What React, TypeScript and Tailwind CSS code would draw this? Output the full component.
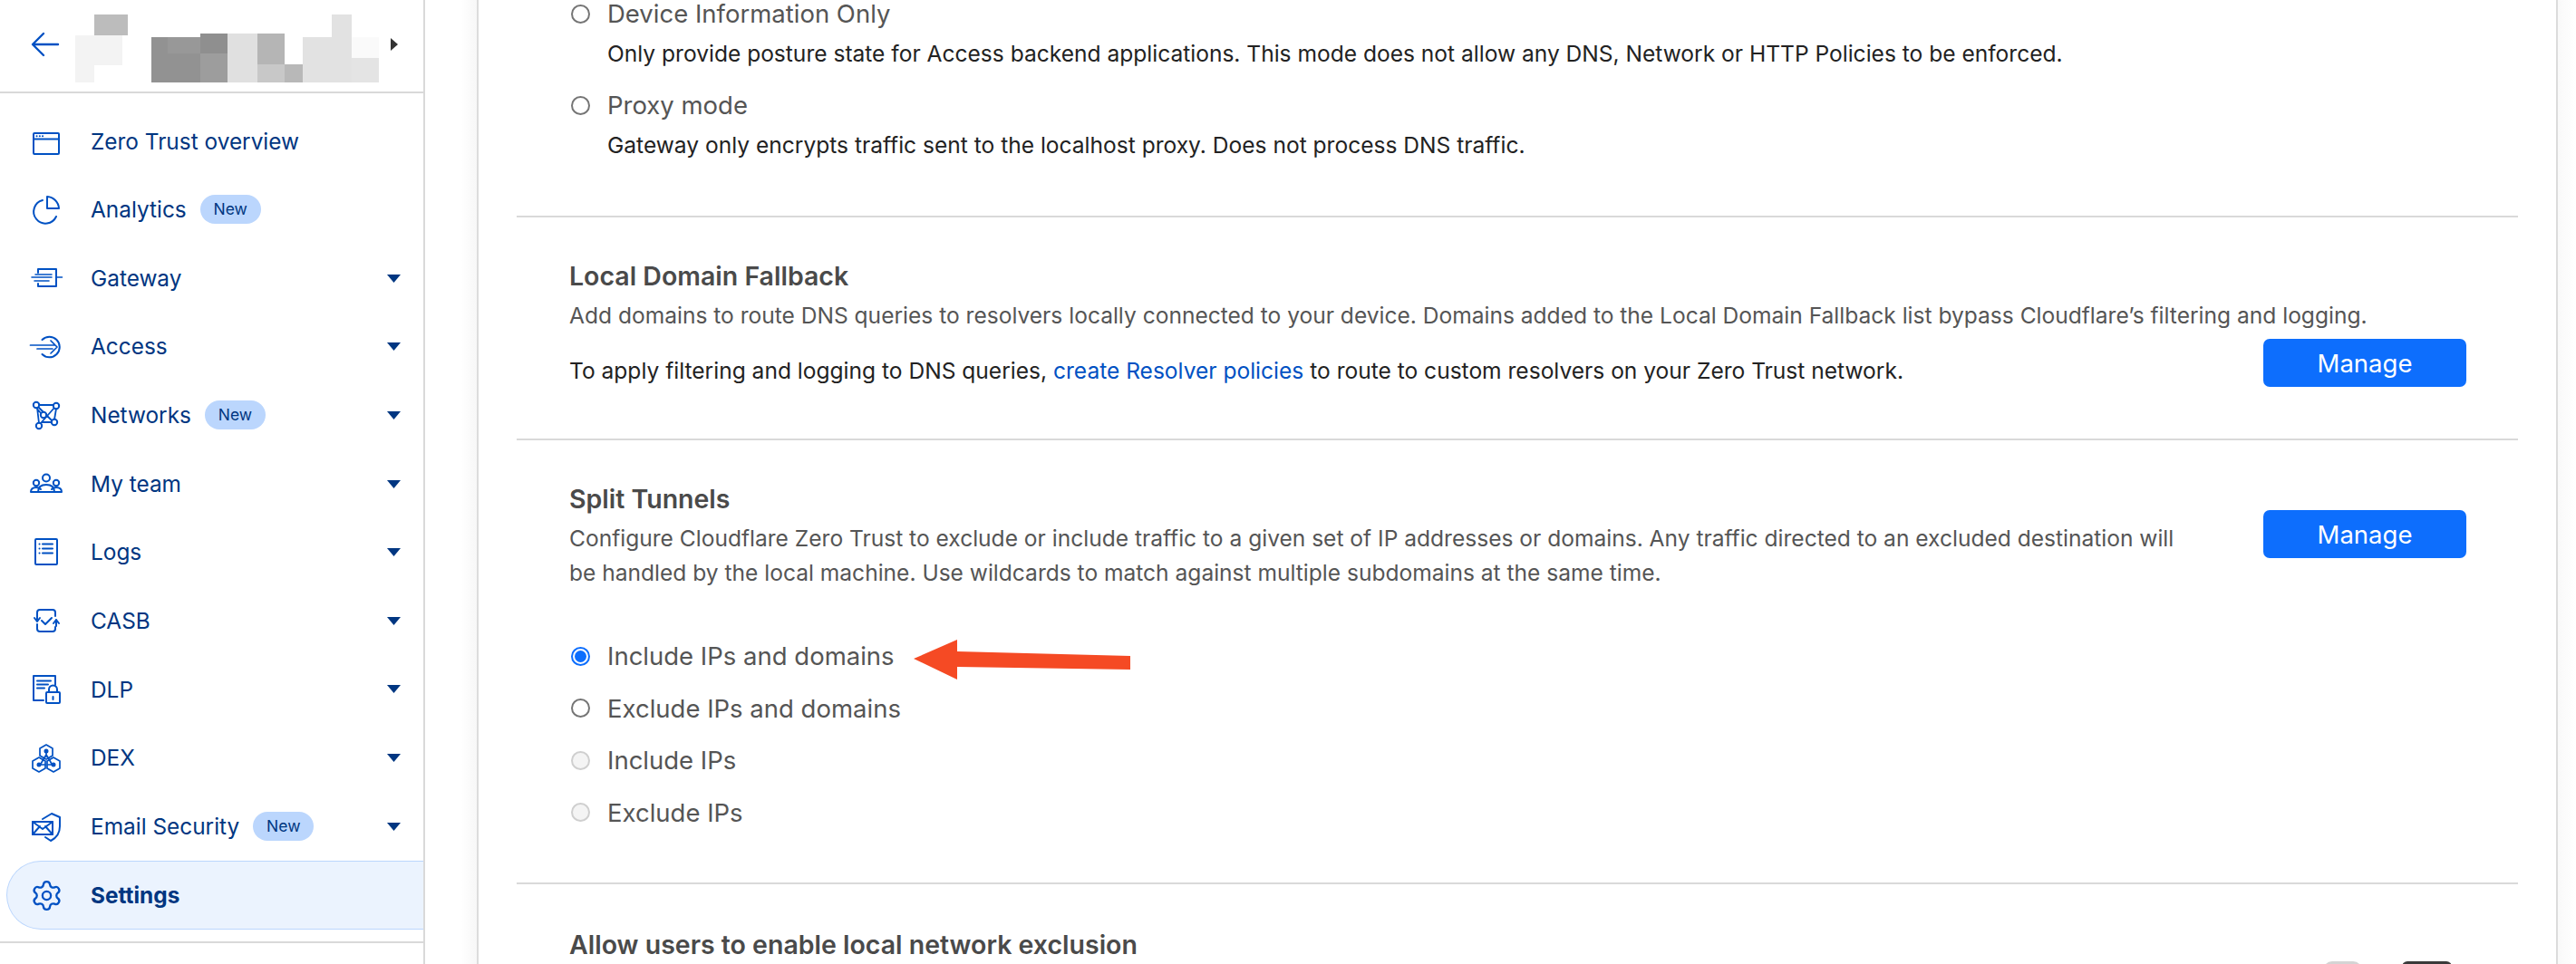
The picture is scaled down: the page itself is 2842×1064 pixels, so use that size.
import React from "react";
import { Settings } from "lucide-react";

const blue = "#0051c3";

const Svg = ({ children }: { children: React.ReactNode }) => (
  <svg width="40" height="40" viewBox="0 0 40 40" fill="none" stroke={blue} strokeWidth="2" strokeLinecap="round" strokeLinejoin="round" className="shrink-0">
    {children}
  </svg>
);

const icons: Record<string, React.ReactNode> = {
  overview: (
    <Svg>
      <rect x="6" y="11" width="28" height="23" rx="1" />
      <path d="M6 17.5H34" />
      <path d="M9.5 14.2h.1M12.8 14.2h.1M16 14.2h.1" />
    </Svg>
  ),
  analytics: (
    <Svg>
      <path d="M21 6A14 14 0 0 1 34 19H21Z" />
      <path d="M16 10A13 13 0 1 0 31 28" />
    </Svg>
  ),
  gateway: (
    <Svg>
      <path d="M11 14V10H31V29H11V26" />
      <path d="M31 19H37.5M4 19H26M8 16H26M7 23H23" strokeWidth="1.6" />
    </Svg>
  ),
  access: (
    <Svg>
      <path d="M15.5 12A11.3 11.3 0 1 1 15.5 28" />
      <path d="M2.5 18H30M10 22H27M25 13L32 20L25 27" strokeWidth="1.7" />
    </Svg>
  ),
  networks: (
    <Svg>
      <path d="M12 9H28M31 13L29 25M26 28H15M12 29L10 12M11 11L26 26M29 12L14 29M9 12L14 18" strokeWidth="1.8" />
      <circle cx="9" cy="9" r="3.2" fill="white" />
      <circle cx="31" cy="10" r="3.2" fill="white" />
      <circle cx="29" cy="28" r="3.2" fill="white" />
      <circle cx="12" cy="32" r="3.2" fill="white" />
      <circle cx="17" cy="20" r="3.2" fill="white" />
    </Svg>
  ),
  team: (
    <Svg>
      <circle cx="20" cy="13.5" r="4" />
      <circle cx="9" cy="19" r="3.2" />
      <circle cx="31" cy="19" r="3.2" />
      <path d="M3 29H37M3 29C3 25 6 24 9 24C11 24 13 25 14 26M37 29C37 25 34 24 31 24C29 24 27 25 26 26M11 29C11 23 15 21 20 21C25 21 29 23 29 29" />
    </Svg>
  ),
  logs: (
    <Svg>
      <rect x="8" y="5" width="24" height="28" rx="1" />
      <path d="M12.5 10.5h.1M12.5 15.5h.1M12.5 20.5h.1M16 10.5H27M16 15.5H27M16 20.5H27" />
    </Svg>
  ),
  casb: (
    <Svg>
      <path d="M10 14V11A3 3 0 0 1 13 8H27A3 3 0 0 1 30 11V15M30 27V29A3 3 0 0 1 27 32H13A3 3 0 0 1 10 29V24" />
      <path d="M7 17L10 21L13 17M28 23L31 19L34 23M31 19V26M10 14V21" />
      <path d="M15 20L19 24L26 17" />
    </Svg>
  ),
  dlp: (
    <Svg>
      <path d="M17 32H6V5H30V15" />
      <path d="M10 10.5H25M10 14.5H22M10 18.5H18" />
      <rect x="20" y="23" width="15" height="12" rx="1" />
      <path d="M23 23V20A4.5 4.5 0 0 1 32 20V23" />
      <path d="M27.5 28V31" />
    </Svg>
  ),
  dex: (
    <Svg>
      <path d="M20 5L27 9V17L20 21L13 17V9Z" strokeWidth="1.7" />
      <path d="M12 19L19 23V31L12 35L5 31V23Z" strokeWidth="1.7" />
      <path d="M28 19L35 23V31L28 35L21 31V23Z" strokeWidth="1.7" />
      <path d="M20 12V18M12 27H19M28 27H22M20 16L14 26M20 16L26 26" strokeWidth="1.7" />
      <circle cx="20" cy="12" r="1.5" fill={blue} />
      <circle cx="12" cy="27" r="1.5" fill={blue} />
      <circle cx="28" cy="27" r="1.5" fill={blue} />
    </Svg>
  ),
  email: (
    <Svg>
      <path d="M16 12L26 6L35 10V20C35 28 31 33 25 36L19 32" />
      <path d="M5 15H27V29H5Z" fill="white" />
      <path d="M5 15L16 23L27 15M5 29L13 20M27 29L19 20" />
    </Svg>
  ),
};

const Caret = () => (
  <svg width="15" height="9" viewBox="0 0 15 9" className="shrink-0">
    <path d="M0 0H15L7.5 9Z" fill="#003681" />
  </svg>
);

const Badge = () => (
  <span className="ml-[15px] flex h-[32px] w-[67px] items-center justify-center rounded-full bg-[#bbd6fd] text-[17.5px] text-[#003681]">New</span>
);

const items = [
  { icon: "overview", label: "Zero Trust overview" },
  { icon: "analytics", label: "Analytics", badge: true },
  { icon: "gateway", label: "Gateway", caret: true },
  { icon: "access", label: "Access", caret: true },
  { icon: "networks", label: "Networks", badge: true, caret: true },
  { icon: "team", label: "My team", caret: true },
  { icon: "logs", label: "Logs", caret: true },
  { icon: "casb", label: "CASB", caret: true },
  { icon: "dlp", label: "DLP", caret: true },
  { icon: "dex", label: "DEX", caret: true },
  { icon: "email", label: "Email Security", badge: true, caret: true },
];

const mosaic = [
  [104, 16, 37, 23, "#bcbcbc"],
  [83, 39, 52, 33, "#f3f3f3"],
  [83, 72, 21, 19, "#f3f3f3"],
  [167, 41, 54, 50, "#929292"],
  [185, 41, 36, 18, "#989898"],
  [221, 37, 30, 22, "#8f8f8f"],
  [221, 59, 30, 32, "#9d9d9d"],
  [251, 37, 33, 54, "#e0e0e0"],
  [284, 37, 30, 34, "#b5b5b5"],
  [284, 71, 30, 20, "#c8c8c8"],
  [314, 71, 20, 20, "#b8b8b8"],
  [334, 41, 54, 50, "#e2e2e2"],
  [366, 16, 22, 25, "#e2e2e2"],
  [388, 41, 30, 23, "#fafafa"],
  [388, 64, 30, 27, "#e4e4e4"],
] as const;

const Radio = ({ label, state, short }: { label: string; state: "on" | "off" | "disabled"; short?: boolean }) => (
  <div className={`ml-[2px] flex items-center gap-[19px] text-[27.5px] leading-[30px] text-[#555555] ${short ? "h-[30px]" : "h-[38px]"}`}>
    {state === "on" && (
      <span className="flex size-[21px] shrink-0 items-center justify-center rounded-full border-2 border-[#0d6efd] bg-white">
        <span className="size-[13px] rounded-full bg-[#0d6efd]" />
      </span>
    )}
    {state === "off" && <span className="size-[21px] shrink-0 rounded-full border-2 border-[#757575] bg-white" />}
    {state === "disabled" && <span className="size-[21px] shrink-0 rounded-full border-2 border-[#cfcfcf] bg-[#f4f4f4]" />}
    <span className="whitespace-nowrap">{label}</span>
  </div>
);

const Manage = () => (
  <button className="flex h-[53px] w-[224px] shrink-0 items-center justify-center rounded-[7px] bg-[#0d6efd] pt-[2px] text-[27.5px] text-white">Manage</button>
);

const Heading = ({ children }: { children: React.ReactNode }) => (
  <h3 className="h-[36px] pt-[2px] text-[28.5px] leading-[36px] font-semibold whitespace-nowrap text-[#4a4a4a]">{children}</h3>
);

export default function App() {
  return (
    <div className="flex h-[1064px] w-[2842px] overflow-hidden bg-white font-['Inter',sans-serif]">
      <aside className="flex h-full w-[469px] shrink-0 flex-col border-r-2 border-[#d9d9d9] bg-white">
        <div className="flex h-[103px] shrink-0 items-center border-b-2 border-[#d9d9d9]">
          <svg width="467" height="101" viewBox="0 0 467 101" fill="none" className="shrink-0">
            <path d="M64 49H37M48 37L36 49L48 61" stroke={blue} strokeWidth="2.4" strokeLinecap="round" strokeLinejoin="round" />
            {mosaic.map(([x, y, w, h, c], i) => (
              <rect key={i} x={x} y={y} width={w} height={h} fill={c} />
            ))}
            <path d="M431 42L439 49L431 56Z" fill="#333333" />
          </svg>
        </div>
        <nav className="pt-[15px]">
          {items.map((it) => (
            <div key={it.label} className="flex h-[75.65px] items-center pr-[25px] pl-[31px]">
              {icons[it.icon]}
              <span className="ml-[29px] text-[24.4px] whitespace-nowrap text-[#003681]">{it.label}</span>
              {it.badge && <Badge />}
              {it.caret && <span className="ml-auto flex"><Caret /></span>}
            </div>
          ))}
          <div className="ml-[7px] flex h-[76px] items-center rounded-l-full border border-r-0 border-[#bbd6fd] bg-[#ebf3fe] pl-[23px]">
            <span className="flex size-[40px] items-center justify-center">
              <Settings size={37} color={blue} strokeWidth={1.5} />
            </span>
            <span className="ml-[29px] text-[24.4px] font-bold text-[#003681]">Settings</span>
          </div>
        </nav>
        <div className="mt-[13px] border-t-2 border-[#d9d9d9]" />
      </aside>
      <div className="w-[57px] shrink-0 bg-gradient-to-r from-white from-70% to-[#f7f7f7]" />
      <main className="w-[2296px] shrink-0 border-x-2 border-[#dcdcdc] bg-white px-[42px]">
        <section className="flex flex-col gap-[13px] pb-[52px] pl-[58px]">
          <div>
            <Radio label="Device Information Only" state="off" short />
            <p className="mt-[4px] h-[50px] pl-[42px] text-[24.55px] leading-[50px] whitespace-nowrap text-[#222222]">Only provide posture state for Access backend applications. This mode does not allow any DNS, Network or HTTP Policies to be enforced.</p>
          </div>
          <div className="pb-[1px]">
            <Radio label="Proxy mode" state="off" />
            <p className="h-[50px] pl-[42px] text-[24.55px] leading-[50px] whitespace-nowrap text-[#222222]">Gateway only encrypts traffic sent to the localhost proxy. Does not process DNS traffic.</p>
          </div>
        </section>
        <section className="border-t-2 border-[#d9d9d9] pt-[45px] pr-[57px] pb-[57px] pl-[58px]">
          <Heading>Local Domain Fallback</Heading>
          <p className="mt-[9px] h-[36px] text-[24.55px] leading-[36px] whitespace-nowrap text-[#555555]">Add domains to route DNS queries to resolvers locally connected to your device. Domains added to the Local Domain Fallback list bypass Cloudflare’s filtering and logging.</p>
          <div className="mt-[8px] flex h-[53px] items-end justify-between">
            <p className="h-[36px] text-[24.55px] leading-[36px] whitespace-nowrap text-[#222222]">
              To apply filtering and logging to DNS queries, <span className="text-[#0051c3]">create Resolver policies</span> to route to custom resolvers on your Zero Trust network.
            </p>
            <Manage />
          </div>
        </section>
        <section className="border-t-2 border-[#d9d9d9] pt-[45px] pr-[57px] pb-[58px] pl-[58px]">
          <div className="flex justify-between">
            <div>
              <Heading>Split Tunnels</Heading>
              <p className="mt-[8px] text-[24.55px] leading-[38px] whitespace-nowrap text-[#555555]">
                Configure Cloudflare Zero Trust to exclude or include traffic to a given set of IP addresses or domains. Any traffic directed to an excluded destination will
                <br />
                be handled by the local machine. Use wildcards to match against multiple subdomains at the same time.
              </p>
            </div>
            <div className="mt-[32px]">
              <Manage />
            </div>
          </div>
          <div className="mt-[54px] flex flex-col gap-[19.5px]">
            <div className="relative">
              <Radio label="Include IPs and domains" state="on" />
              <svg width="240" height="46" viewBox="0 0 240 46" className="absolute top-[1px] left-[380px]">
                <path d="M0 21L48 0V13L239 18V33L48 30V44Z" fill="#f54a24" />
              </svg>
            </div>
            <Radio label="Exclude IPs and domains" state="off" />
            <Radio label="Include IPs" state="disabled" />
            <Radio label="Exclude IPs" state="disabled" />
          </div>
        </section>
        <section className="border-t-2 border-[#d9d9d9] pt-[47px] pl-[58px]">
          <Heading>Allow users to enable local network exclusion</Heading>
          <div className="mt-[2px] flex justify-end gap-[44px] pr-[73px]">
            <span className="h-[20px] w-[43px] rounded-t-[10px] bg-[#d4d4d4]" />
            <span className="h-[20px] w-[55px] rounded-t-[6px] bg-[#3a3a3a]" />
          </div>
        </section>
      </main>
      <div className="flex-1 bg-gradient-to-r from-[#f9f9f9] to-white" />
    </div>
  );
}
